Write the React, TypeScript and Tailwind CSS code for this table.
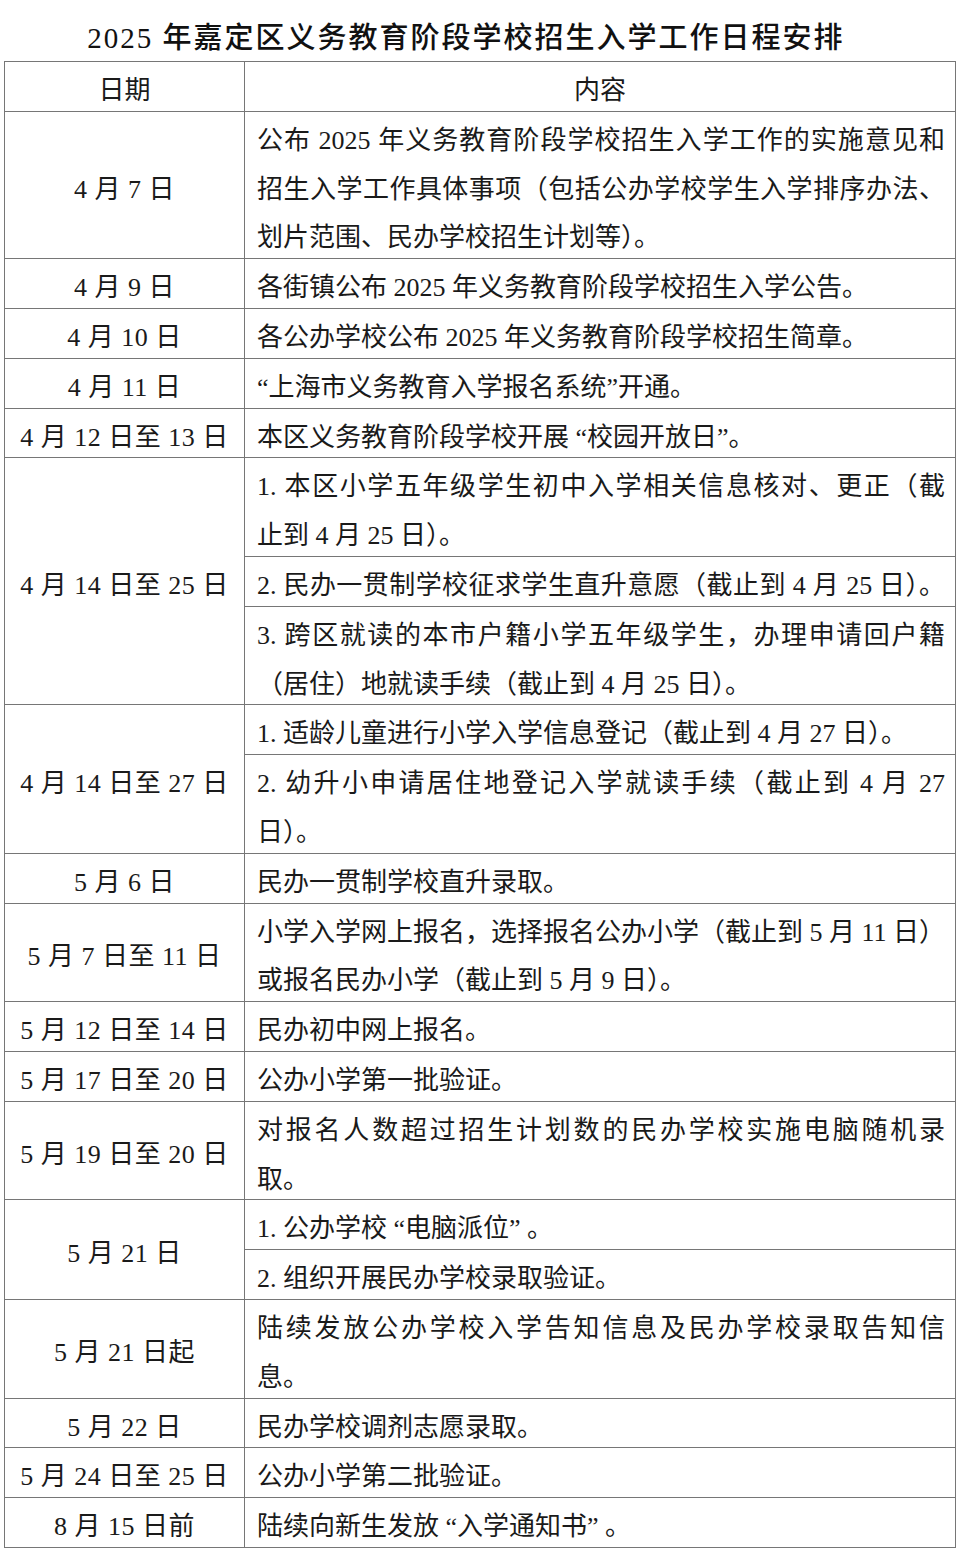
import React from 'react'

type Item = { lines: string[]; full?: boolean }
type Row = { date: string; items: Item[] }

const rows: Row[] = [
  {
    date: '4 月 7 日',
    items: [
      {
        lines: [
          '公布 2025 年义务教育阶段学校招生入学工作的实施意见和',
          '招生入学工作具体事项（包括公办学校学生入学排序办法、',
          '划片范围、民办学校招生计划等）。',
        ],
      },
    ],
  },
  { date: '4 月 9 日', items: [{ lines: ['各街镇公布 2025 年义务教育阶段学校招生入学公告。'] }] },
  { date: '4 月 10 日', items: [{ lines: ['各公办学校公布 2025 年义务教育阶段学校招生简章。'] }] },
  { date: '4 月 11 日', items: [{ lines: [' “上海市义务教育入学报名系统”开通。'] }] },
  { date: '4 月 12 日至 13 日', items: [{ lines: ['本区义务教育阶段学校开展 “校园开放日”。'] }] },
  {
    date: '4 月 14 日至 25 日',
    items: [
      { lines: ['1. 本区小学五年级学生初中入学相关信息核对、更正（截', '止到 4 月 25 日）。'] },
      { lines: ['2. 民办一贯制学校征求学生直升意愿（截止到 4 月 25 日）。'], full: true },
      { lines: ['3. 跨区就读的本市户籍小学五年级学生，办理申请回户籍', '（居住）地就读手续（截止到 4 月 25 日）。'] },
    ],
  },
  {
    date: '4 月 14 日至 27 日',
    items: [
      { lines: ['1. 适龄儿童进行小学入学信息登记（截止到 4 月 27 日）。'] },
      { lines: ['2. 幼升小申请居住地登记入学就读手续（截止到 4 月 27', '日）。'] },
    ],
  },
  { date: '5 月 6 日', items: [{ lines: ['民办一贯制学校直升录取。'] }] },
  {
    date: '5 月 7 日至 11 日',
    items: [{ lines: ['小学入学网上报名，选择报名公办小学（截止到 5 月 11 日）', '或报名民办小学（截止到 5 月 9 日）。'] }],
  },
  { date: '5 月 12 日至 14 日', items: [{ lines: ['民办初中网上报名。'] }] },
  { date: '5 月 17 日至 20 日', items: [{ lines: ['公办小学第一批验证。'] }] },
  {
    date: '5 月 19 日至 20 日',
    items: [{ lines: ['对报名人数超过招生计划数的民办学校实施电脑随机录', '取。'] }],
  },
  {
    date: '5 月 21 日',
    items: [{ lines: ['1. 公办学校 “电脑派位” 。'] }, { lines: ['2. 组织开展民办学校录取验证。'] }],
  },
  {
    date: '5 月 21 日起',
    items: [{ lines: ['陆续发放公办学校入学告知信息及民办学校录取告知信', '息。'] }],
  },
  { date: '5 月 22 日', items: [{ lines: ['民办学校调剂志愿录取。'] }] },
  { date: '5 月 24 日至 25 日', items: [{ lines: ['公办小学第二批验证。'] }] },
  { date: '8 月 15 日前', items: [{ lines: ['陆续向新生发放 “入学通知书” 。'] }] },
]

// text sits a few px low in each line box, as in the scanned table
const cell = 'border border-[#767676] p-0'
const line = 'h-[48.8px] pt-[10px] leading-[38.8px]'

function Content({ item }: { item: Item }) {
  return (
    <td className={`${cell} pl-[12px] pr-[10px] text-left`}>
      {item.lines.map((text, i) => {
        const justify = i < item.lines.length - 1 || item.full
        return (
          <div key={i} className={`${line} ${justify ? 'text-justify [text-align-last:justify]' : ''}`}>
            {text}
          </div>
        )
      })}
    </td>
  )
}

export default function App() {
  return (
    <div className="w-[960px] bg-white text-[#1a1a1a] font-['Liberation_Serif','Noto_Sans_CJK_SC',serif]">
      <h1 className="pt-[20px] pb-[5px] pr-[28px] text-center text-[29px] leading-[36px] tracking-[2px] font-medium text-[#111]">
        2025 年嘉定区义务教育阶段学校招生入学工作日程安排
      </h1>
      <div className="px-[4px]">
        <table className="w-full table-fixed border-collapse text-[26px]">
          <colgroup>
            <col className="w-[240px]" />
            <col />
          </colgroup>
          <thead>
            <tr>
              <th className={`${cell} font-normal text-center`}>
                <div className={line}>日期</div>
              </th>
              <th className={`${cell} font-normal text-center`}>
                <div className={line}>内容</div>
              </th>
            </tr>
          </thead>
          <tbody>
            {rows.map((row) =>
              row.items.map((item, i) => (
                <tr key={row.date + i}>
                  {i === 0 && (
                    <td
                      rowSpan={row.items.length}
                      className={`${cell} pt-[10px] leading-[38.8px] text-center align-middle tracking-[0.5px]`}
                    >
                      {row.date}
                    </td>
                  )}
                  <Content item={item} />
                </tr>
              )),
            )}
          </tbody>
        </table>
      </div>
    </div>
  )
}
